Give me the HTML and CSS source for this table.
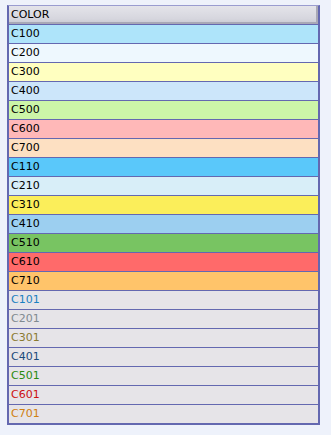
FILE: index.html
```html
<!DOCTYPE html>
<html>
<head>
<meta charset="utf-8">
<link rel="stylesheet" href="styles.css">
</head>
<body>
<div class="grid">
  <div class="hdr">COLOR</div>
  <div class="row c100">C100</div>
  <div class="row c200">C200</div>
  <div class="row c300">C300</div>
  <div class="row c400">C400</div>
  <div class="row c500">C500</div>
  <div class="row c600">C600</div>
  <div class="row c700">C700</div>
  <div class="row c110">C110</div>
  <div class="row c210">C210</div>
  <div class="row c310">C310</div>
  <div class="row c410">C410</div>
  <div class="row c510">C510</div>
  <div class="row c610">C610</div>
  <div class="row c710">C710</div>
  <div class="row g c101">C101</div>
  <div class="row g c201">C201</div>
  <div class="row g c301">C301</div>
  <div class="row g c401">C401</div>
  <div class="row g c501">C501</div>
  <div class="row g c601">C601</div>
  <div class="row g c701">C701</div>
</div>
</body>
</html>
```
FILE: styles.css
```css
html, body {
  margin: 0;
  padding: 0;
  background: #eef2fb;
}
body {
  padding: 5px 0 0 7px;
  font-family: "DejaVu Sans", Verdana, sans-serif;
  font-size: 11px;
  color: #000;
}
.grid {
  width: 309px;
  display: flex;
  flex-direction: column;
  border-left: 2px solid #6468b0;
  border-right: 2px solid #6468b0;
  border-bottom: 2px solid #6468b0;
  border-top: 1px solid #9a9cd0;
}
.hdr {
  height: 18px;
  line-height: 18px;
  padding-left: 2px;
  background: linear-gradient(#e4e4ea, #d6d6de 70%, #c8c8d2);
  box-shadow: inset -2px -2px 0 #a8a8b6;
  border-bottom: 1px solid #6468b0;
}
.row {
  height: 18px;
  line-height: 18px;
  padding-left: 2px;
  border-bottom: 1px solid #6468b0;
}
.row:last-child { border-bottom: none; }
.c100 { background: #aee4fa; }
.c200 { background: #eef8fe; }
.c300 { background: #ffffc0; }
.c400 { background: #cce6fa; }
.c500 { background: #ccf5a8; }
.c600 { background: #ffb8b8; }
.c700 { background: #fde0c2; }
.c110 { background: #5ac8fa; }
.c210 { background: #d8eef8; }
.c310 { background: #fbee5a; }
.c410 { background: #9ccff0; }
.c510 { background: #78c462; }
.c610 { background: #ff6a6a; }
.c710 { background: #ffc46a; }
.g { background: #e6e4e8; }
.c101 { color: #1a80c0; }
.c201 { color: #808a90; }
.c301 { color: #8a7a30; }
.c401 { color: #1a4a7a; }
.c501 { color: #2a8a10; }
.c601 { color: #cc1010; }
.c701 { color: #d08010; }
```
